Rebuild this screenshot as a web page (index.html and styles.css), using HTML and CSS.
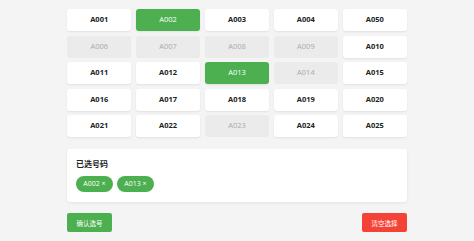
FILE: index.html
```html
<!doctype html>
<html>
<head lang="zh">
	<meta charset="UTF-8">
	<meta name="viewport" content="width=device-width, initial-scale=1">
	<title>选号</title>
	<link rel="stylesheet" href="styles.css">
</head>
<body>

<div class="nb-box">
	<div class="nb-grid">
		<div class="nb-cell">A001</div>
		<div class="nb-cell is-selected">A002</div>
		<div class="nb-cell">A003</div>
		<div class="nb-cell">A004</div>
		<div class="nb-cell">A050</div>
		<div class="nb-cell is-taken">A006</div>
		<div class="nb-cell is-taken">A007</div>
		<div class="nb-cell is-taken">A008</div>
		<div class="nb-cell is-taken">A009</div>
		<div class="nb-cell">A010</div>
		<div class="nb-cell">A011</div>
		<div class="nb-cell">A012</div>
		<div class="nb-cell is-selected">A013</div>
		<div class="nb-cell is-taken">A014</div>
		<div class="nb-cell">A015</div>
		<div class="nb-cell">A016</div>
		<div class="nb-cell">A017</div>
		<div class="nb-cell">A018</div>
		<div class="nb-cell">A019</div>
		<div class="nb-cell">A020</div>
		<div class="nb-cell">A021</div>
		<div class="nb-cell">A022</div>
		<div class="nb-cell is-taken">A023</div>
		<div class="nb-cell">A024</div>
		<div class="nb-cell">A025</div>
	</div>

	<div class="nb-picked">
		<div class="nb-picked__title">已选号码</div>
		<div class="nb-picked__tags">
			<span class="nb-tag">A002 ×</span>
			<span class="nb-tag">A013 ×</span>
		</div>
	</div>

	<div class="nb-actions">
		<button class="nb-btn nb-btn--ok">确认选号</button>
		<button class="nb-btn nb-btn--clear">清空选择</button>
	</div>
</div>

</body>
</html>
```

FILE: styles.css
```css
* {
	margin: 0;
	padding: 0;
	box-sizing: border-box;
}
body {
	background-color: #f4f4f4;
	color: #222;
	font-family: 'Open Sans', 'Noto Sans CJK SC', sans-serif;
	font-size: 8px;
	line-height: 1.3;
}
.nb-box {
	width: 340px;
	margin: 0 auto;
	padding-top: 9px;
}
.nb-grid {
	display: grid;
	grid-template-columns: repeat(5, 1fr);
	gap: 4.5px;
}
.nb-cell {
	display: flex;
	align-items: center;
	justify-content: center;
	height: 22px;
	background-color: #fff;
	border-radius: 3px;
	box-shadow: 0 1px 2px rgba(0, 0, 0, .08);
	font-size: 7.5px;
	font-weight: bold;
	color: #222;
}
.nb-cell.is-selected {
	background-color: #4caf50;
	color: #fff;
	font-weight: normal;
}
.nb-cell.is-taken {
	background-color: #ebebeb;
	color: #aaa;
	font-weight: normal;
	box-shadow: none;
}
.nb-picked {
	margin-top: 12px;
	background-color: #fff;
	border-radius: 3px;
	box-shadow: 0 1px 3px rgba(0, 0, 0, .08);
	padding: 9px 9px 9px;
	height: 53px;
}
.nb-picked__title {
	font-size: 8px;
	font-weight: bold;
	color: #222;
	line-height: 12px;
}
.nb-picked__tags {
	display: flex;
	gap: 4px;
	margin-top: 6px;
}
.nb-tag {
	display: inline-flex;
	align-items: center;
	height: 16px;
	padding: 0 6px;
	width: 37px;
	justify-content: center;
	background-color: #4caf50;
	color: #fff;
	border-radius: 8px;
	font-size: 7px;
}
.nb-actions {
	display: flex;
	justify-content: space-between;
	margin-top: 11px;
}
.nb-btn {
	border: 0;
	border-radius: 2px;
	color: #fff;
	font-family: 'Noto Sans CJK SC', sans-serif;
	font-size: 6.5px;
	height: 19px;
	width: 45px;
}
.nb-btn--ok {
	background-color: #4caf50;
}
.nb-btn--clear {
	background-color: #f44336;
}
```
